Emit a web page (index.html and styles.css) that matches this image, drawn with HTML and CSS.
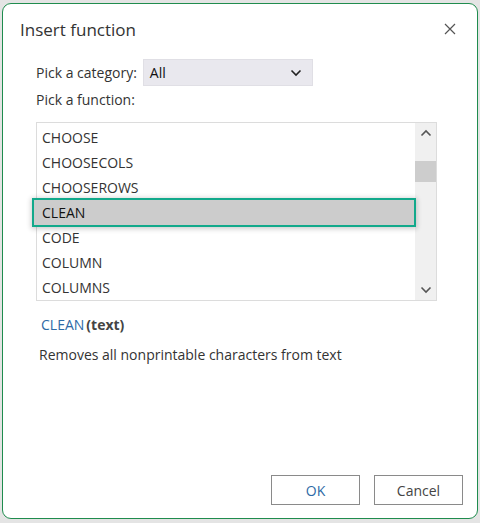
FILE: index.html
```html
<!DOCTYPE html>
<html>
<head>
<meta charset="utf-8">
<link rel="stylesheet" href="styles.css">
</head>
<body>
<div class="dialog">
  <div class="titlebar">
    <div class="title">Insert function</div>
    <svg class="close" width="12" height="12" viewBox="0 0 12 12"><path d="M1 1L11 11M11 1L1 11" stroke="#555" stroke-width="1.2" fill="none"/></svg>
  </div>
  <div class="content">
    <div class="catrow">
      <span class="label">Pick a category:</span>
      <div class="select">
        <span>All</span>
        <svg width="12" height="8" viewBox="0 0 12 8"><path d="M1.5 1.5L6 6L10.5 1.5" stroke="#222" stroke-width="1.6" fill="none"/></svg>
      </div>
    </div>
    <div class="label fnlabel">Pick a function:</div>
    <div class="listbox">
      <div class="items">
        <div class="item">CHOOSE</div>
        <div class="item">CHOOSECOLS</div>
        <div class="item">CHOOSEROWS</div>
        <div class="item selected">CLEAN</div>
        <div class="item">CODE</div>
        <div class="item">COLUMN</div>
        <div class="item">COLUMNS</div>
      </div>
      <div class="scrollbar">
        <svg class="arrow" width="12" height="8" viewBox="0 0 12 8"><path d="M1.5 6.5L6 2L10.5 6.5" stroke="#555" stroke-width="1.6" fill="none"/></svg>
        <div class="track"><div class="thumb"></div></div>
        <svg class="arrow" width="12" height="8" viewBox="0 0 12 8"><path d="M1.5 1.5L6 6L10.5 1.5" stroke="#555" stroke-width="1.6" fill="none"/></svg>
      </div>
    </div>
    <div class="signature"><span class="fname">CLEAN</span><span class="args">(text)</span></div>
    <div class="desc">Removes all nonprintable characters from text</div>
  </div>
  <div class="buttons">
    <button class="btn ok">OK</button>
    <button class="btn">Cancel</button>
  </div>
</div>
</body>
</html>
```
FILE: styles.css
```css
html, body {
  margin: 0;
  padding: 0;
  background: #e4e4e4;
}
body {
  padding: 3px 2px 4px 2px;
  font-family: "Open Sans", "Noto Sans", sans-serif;
  color: #333;
}
.dialog {
  box-sizing: border-box;
  width: 476px;
  height: 516px;
  background: #fff;
  border: 1px solid #1f8c4e;
  border-radius: 9px;
  display: flex;
  flex-direction: column;
}
.titlebar {
  display: flex;
  justify-content: space-between;
  align-items: center;
  padding: 12px 21px 0 17px;
  height: 26px;
}
.title {
  font-size: 17px;
  color: #333;
}
.content {
  padding: 0 0 0 33px;
  font-size: 14px;
}
.catrow {
  display: flex;
  align-items: center;
  margin-top: 17px;
}
.label {
  color: #333;
}
.select {
  box-sizing: border-box;
  margin-left: 6px;
  width: 170px;
  height: 27px;
  background: #e9e8ee;
  border: 1px solid #e0dfe5;
  display: flex;
  align-items: center;
  justify-content: space-between;
  padding: 0 10px 0 6px;
  font-size: 14px;
  color: #111;
}
.fnlabel {
  margin-top: 4px;
}
.listbox {
  box-sizing: border-box;
  margin-top: 13px;
  width: 401px;
  height: 179px;
  border: 1px solid #dcdcdc;
  display: flex;
}
.items {
  flex: 1;
  padding-top: 2px;
}
.item {
  height: 25px;
  line-height: 25px;
  padding-left: 5px;
  color: #333;
}
.item.selected {
  background: #cccccc;
  color: #111;
  outline: 2px solid #12a98b;
  outline-offset: 0;
  box-shadow: 0 1px 5px 3px rgba(0,0,0,0.2);
  margin-left: -3px;
  margin-right: 1px;
  padding-left: 8px;
  position: relative;
}
.scrollbar {
  width: 21px;
  background: #f0f0f0;
  display: flex;
  flex-direction: column;
  align-items: center;
}
.arrow {
  margin: 6px 0;
  flex: none;
}
.track {
  flex: 1;
  width: 100%;
}
.thumb {
  margin-top: 18px;
  height: 21px;
  background: #cdcdcd;
}
.signature {
  margin-top: 14px;
  padding-left: 5px;
}
.fname {
  color: #2e6aa6;
}
.args {
  font-weight: bold;
  color: #444;
  margin-left: 2px;
}
.desc {
  margin-top: 11px;
  padding-left: 3px;
  color: #333;
}
.buttons {
  margin-top: auto;
  display: flex;
  justify-content: flex-end;
  gap: 14px;
  padding: 0 14px 13px 0;
}
.btn {
  box-sizing: border-box;
  width: 89px;
  height: 30px;
  background: #fff;
  border: 1px solid #8a8a8a;
  font-family: "Open Sans", "Noto Sans", sans-serif;
  font-size: 14px;
  color: #444;
  padding: 0;
}
.btn.ok {
  color: #2e6aa6;
}
```
